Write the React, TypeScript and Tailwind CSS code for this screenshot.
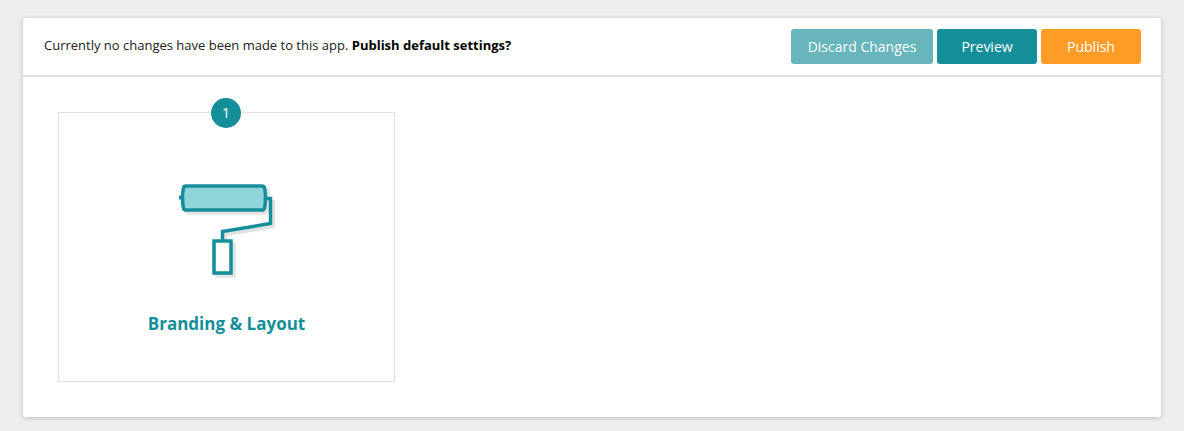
import React from "react";

function Roller() {
  const body = (stroke: string, fill: string, grip: string) => (
    <>
      <path d="M2 13.5H6" fill="none" stroke={stroke} strokeWidth="4" />
      <path d="M6.5 3.8Q7 2 9 2H85Q87 2 87.5 3.8Q88.5 8 88.5 14Q88.500 20 87.500 24.200Q87 26 85 26H9Q7 26 6.500 24.200Q5.500 20 5.500 14Q5.500 8 6.500 3.800Z" fill={fill} stroke={stroke} strokeWidth="3.500" />
      <path d="M88 14.500H93.500V39.500L45.500 47.500V57" fill="none" stroke={stroke} strokeWidth="3.500" />
      <rect x="37" y="57" width="17" height="32" fill={grip} stroke={stroke} strokeWidth="3.500" />
    </>
  );
  return (
    <svg width="104" height="98" viewBox="0 0 104 98" className="block">
      <g transform="translate(3 3)">{body("#e3e3e3", "#e3e3e3", "#e3e3e3")}</g>
      {body("#148f99", "#8fd4da", "#ffffff")}
    </svg>
  );
}

export default function App() {
  return (
    <div className="min-h-[431px] bg-[#eeeeee] px-[23px] pt-[18px] pb-[14px] font-['Open_Sans',sans-serif]">
      <div className="h-[399px] rounded-[2px] bg-white shadow-[0_1px_5px_rgba(0,0,0,0.22)]">
        <div className="flex h-[59px] items-center justify-between border-b-2 border-[#e1e1e1] pl-[21px] pr-5">
          <p className="relative top-[-1px] text-[13px] text-[#1b1b1b]">
            Currently no changes have been made to this app. <strong className="font-bold text-black">Publish default settings?</strong>
          </p>
          <div className="flex gap-1">
            <button className="h-[35px] w-[142px] rounded-[3px] bg-[#68b5bc] text-sm text-white">Discard Changes</button>
            <button className="h-[35px] w-[100px] rounded-[3px] bg-[#148f99] text-sm text-white">Preview</button>
            <button className="h-[35px] w-[100px] rounded-[3px] bg-[#ff9b27] text-sm text-white">Publish</button>
          </div>
        </div>
        <div className="pl-[35px] pt-[35px]">
          <div className="relative flex h-[270px] w-[337px] flex-col items-center border border-[#e1e1e1] pt-[71px]">
            <div className="absolute left-[152px] top-[-15px] flex h-[30px] w-[30px] items-center justify-center rounded-full bg-[#148f99] text-sm text-white">1</div>
            <div className="pl-[4px]"><Roller /></div>
            <div className="mt-[29px] text-[17px] font-bold text-[#148f99]">Branding &amp; Layout</div>
          </div>
        </div>
      </div>
    </div>
  );
}
